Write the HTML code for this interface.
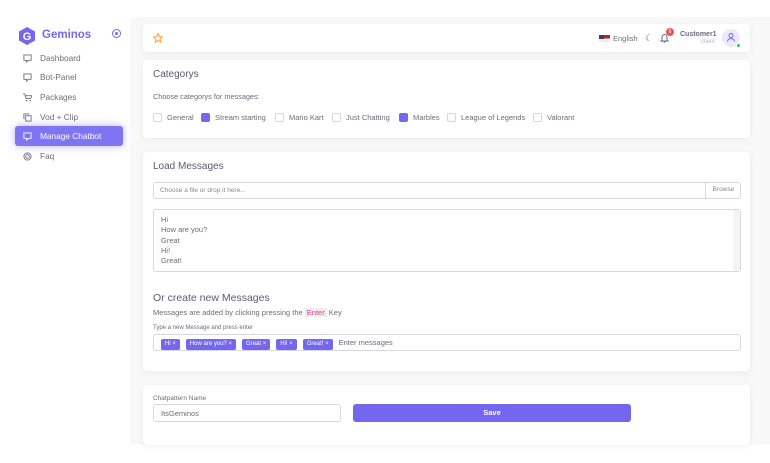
<!DOCTYPE html>
<html><head><style>
*{box-sizing:border-box;margin:0;padding:0}
body{width:770px;height:463px;overflow:hidden;background:#fff;font-family:"Liberation Sans",sans-serif;color:#6e6b7b;position:relative}
.main{position:absolute;left:130px;top:17px;width:640px;height:428px;background:#f8f8f8}
.card{position:absolute;left:143px;width:607px;background:#fff;border-radius:4px;box-shadow:0 2px 8px rgba(0,0,0,.05)}
.nav{position:absolute;left:15px;width:108px;height:20px;font-size:8.3px;display:flex;align-items:center;padding-left:8px;color:#6e6b7b}
.nav svg{margin-right:8px}
.h{font-size:10px;color:#5e5873;position:absolute}
.s{font-size:7px;position:absolute}
.cb{position:absolute;top:113px;font-size:7.5px;display:flex;align-items:center}
.cb i{display:inline-block;width:9px;height:9px;border:1px solid #d8d6de;border-radius:2px;margin-right:5px}
.cb i.on{background:#7367f0;border-color:#7367f0}
.tag{display:inline-block;background:#7367f0;color:#fff;font-size:6px;padding:2px 4px;border-radius:2px;margin-right:6px;line-height:7px}
</style></head><body>
<div class="main"></div>
<svg style="position:absolute;left:18px;top:27px" width="18" height="18" viewBox="0 0 18 18"><polygon points="9,0 17,4.5 17,13.5 9,18 1,13.5 1,4.5" fill="#7367f0"/><text x="9" y="13" font-size="11" font-weight="bold" fill="#fff" text-anchor="middle" font-family="Liberation Sans">G</text></svg>
<div style="position:absolute;left:42px;top:29px;font-size:11.5px;font-weight:bold;color:#7367f0">Geminos</div>
<div style="position:absolute;left:112px;top:29px;width:9px;height:9px;border:1.3px solid #7367f0;border-radius:50%"><div style="width:3px;height:3px;background:#7367f0;border-radius:50%;margin:1.7px"></div></div>
<div class="nav" style="top:48px"><svg width="9" height="9" viewBox="0 0 10 10"><path d="M1 1h8v6H6l-2 2V7H1z" fill="none" stroke="#6e6b7b"/></svg>Dashboard</div>
<div class="nav" style="top:67px"><svg width="9" height="9" viewBox="0 0 10 10"><path d="M1 1h8v6H6l-2 2V7H1z" fill="none" stroke="#6e6b7b"/></svg>Bot-Panel</div>
<div class="nav" style="top:87px"><svg width="9" height="9" viewBox="0 0 10 10"><path d="M0 1h2l1.5 5h5L10 3H3" fill="none" stroke="#6e6b7b"/><circle cx="4" cy="8.5" r=".8" fill="#6e6b7b"/><circle cx="8" cy="8.5" r=".8" fill="#6e6b7b"/></svg>Packages</div>
<div class="nav" style="top:107px"><svg width="9" height="9" viewBox="0 0 10 10"><rect x="3" y="3" width="6" height="6" fill="none" stroke="#6e6b7b"/><path d="M1 7V1h6" fill="none" stroke="#6e6b7b"/></svg>Vod + Clip</div>
<div class="nav" style="top:126px;background:#7f74f2;color:#fff;border-radius:3px;box-shadow:0 0 8px rgba(115,103,240,.5)"><svg width="9" height="9" viewBox="0 0 10 10"><path d="M1 1h8v6H6l-2 2V7H1z" fill="none" stroke="#fff"/></svg>Manage Chatbot</div>
<div class="nav" style="top:146px"><svg width="9" height="9" viewBox="0 0 10 10"><circle cx="5" cy="5" r="4" fill="none" stroke="#6e6b7b"/><circle cx="5" cy="5" r="2" fill="none" stroke="#6e6b7b"/></svg>Faq</div>
<div class="card" style="top:24px;height:28px">
<svg style="position:absolute;left:10px;top:9px" width="10" height="10" viewBox="0 0 10 10"><polygon points="5,.5 6.3,3.6 9.5,3.8 7,6 7.8,9.3 5,7.5 2.2,9.3 3,6 .5,3.8 3.7,3.6" fill="none" stroke="#ff9f43"/></svg>
<div style="position:absolute;left:456px;top:11px;width:11px;height:7px;background:linear-gradient(#b22 0 50%,#eee 50%);"><div style="width:5px;height:4px;background:#3c3b6e"></div></div>
<div style="position:absolute;left:470px;top:10px;font-size:7.5px">English</div>
<div style="position:absolute;left:502px;top:9px;font-size:9px">☾</div>
<svg style="position:absolute;left:517px;top:9px" width="9" height="10" viewBox="0 0 9 10"><path d="M2 7V4a2.5 2.5 0 015 0v3l1 1H1z M3.5 9h2" fill="none" stroke="#6e6b7b"/></svg>
<div style="position:absolute;left:523px;top:4px;width:8px;height:8px;border-radius:50%;background:#ea5455;color:#fff;font-size:5px;text-align:center;line-height:9px">6</div>
<div style="position:absolute;left:537px;top:7px;font-size:7px;font-weight:bold;color:#6e6b7b">Customer1</div>
<div style="position:absolute;left:558px;top:15px;font-size:6px;color:#b9b9c3">client</div>
<div style="position:absolute;left:579px;top:5px;width:18px;height:18px;border-radius:50%;background:#ebe9fd"></div>
<svg style="position:absolute;left:584px;top:9px" width="8" height="9" viewBox="0 0 8 9"><circle cx="4" cy="2.5" r="2" fill="none" stroke="#7367f0"/><path d="M.5 8.5a3.5 3 0 017 0" fill="none" stroke="#7367f0"/></svg>
<div style="position:absolute;left:593px;top:19px;width:5px;height:5px;border-radius:50%;background:#28c76f;border:1px solid #fff"></div>
</div>
<div class="card" style="top:60px;height:78px"></div>
<div class="h" style="left:153px;top:69px">Categorys</div>
<div class="s" style="left:153px;top:91px;font-size:7.3px;top:92px">Choose categorys for messages:</div>
<div class="cb" style="left:153px"><i></i>General</div>
<div class="cb" style="left:201px"><i class="on"></i>Stream starting</div>
<div class="cb" style="left:275px"><i></i>Mario Kart</div>
<div class="cb" style="left:332px"><i></i>Just Chatting</div>
<div class="cb" style="left:399px"><i class="on"></i>Marbles</div>
<div class="cb" style="left:447px"><i></i>League of Legends</div>
<div class="cb" style="left:533px"><i></i>Valorant</div>
<div class="card" style="top:152px;height:219px"></div>
<div class="h" style="left:153px;top:161px">Load Messages</div>
<div style="position:absolute;left:153px;top:182px;width:588px;height:17px;border:1px solid #d8d6de;border-radius:3px;font-size:6.5px;padding:4px 6px;color:#888">Choose a file or drop it here...</div>
<div style="position:absolute;left:705px;top:182px;width:36px;height:17px;border-left:1px solid #d8d6de;font-size:6.5px;padding:4px 0;text-align:center;color:#888">Browse</div>
<div style="position:absolute;left:153px;top:209px;width:588px;height:63px;border:1px solid #d8d6de;border-radius:3px;font-size:7.5px;padding:5px 7px;line-height:10.3px">Hi<br>How are you?<br>Great<br>Hi!<br>Great!</div>
<div style="position:absolute;left:733px;top:210px;width:7px;height:61px;background:#f4f4f4"></div>
<div class="h" style="left:153px;top:292px;font-size:10.5px">Or create new Messages</div>
<div class="s" style="left:153px;top:308px;font-size:7.5px">Messages are added by clicking pressing the <span style="background:#eee;color:#e83e8c;padding:0 2px">Enter</span> Key</div>
<div class="s" style="left:153px;top:325px;font-size:6px">Type a new Message and press enter</div>
<div style="position:absolute;left:153px;top:334px;width:588px;height:17px;border:1px solid #d8d6de;border-radius:3px;padding:3px 0 0 7px;font-size:7.5px;white-space:nowrap"><span class="tag">Hi ×</span><span class="tag">How are you? ×</span><span class="tag">Great ×</span><span class="tag">Hi! ×</span><span class="tag">Great! ×</span>Enter messages</div>
<div class="card" style="top:385px;height:60px"></div>
<div class="s" style="left:153px;top:395px;font-size:6.5px">Chatpattern Name</div>
<div style="position:absolute;left:153px;top:404px;width:188px;height:18px;border:1px solid #d8d6de;border-radius:3px;font-size:7.5px;padding:4px 7px">ItsGeminos</div>
<div style="position:absolute;left:353px;top:404px;width:278px;height:18px;background:#7367f0;border-radius:3px;color:#fff;font-size:7.5px;font-weight:bold;text-align:center;line-height:18px">Save</div>
</body></html>
